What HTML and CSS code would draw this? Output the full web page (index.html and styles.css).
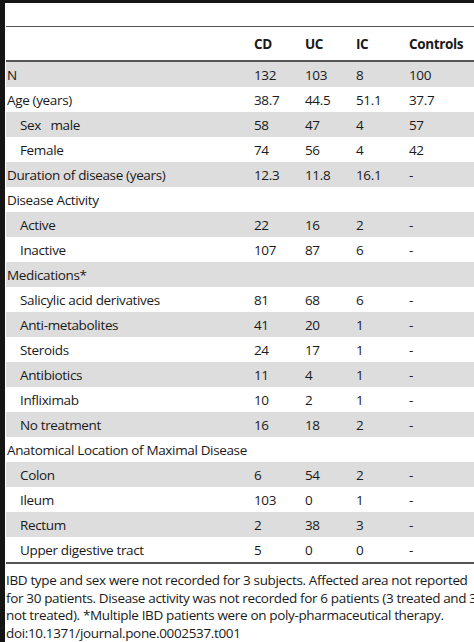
FILE: index.html
```html
<!DOCTYPE html>
<html>
<head>
<meta charset="utf-8">
<link rel="stylesheet" href="styles.css">
</head>
<body>
<div class="page">
  <div class="table">
    <div class="row head">
      <div class="lab"></div>
      <div class="num">CD</div>
      <div class="num">UC</div>
      <div class="num">IC</div>
      <div class="num">Controls</div>
    </div>
    <div class="row g"><div class="lab">N</div><div class="num">132</div><div class="num">103</div><div class="num">8</div><div class="num">100</div></div>
    <div class="row"><div class="lab">Age (years)</div><div class="num">38.7</div><div class="num">44.5</div><div class="num">51.1</div><div class="num">37.7</div></div>
    <div class="row g"><div class="lab ind">Sex&nbsp;&nbsp;&nbsp;male</div><div class="num">58</div><div class="num">47</div><div class="num">4</div><div class="num">57</div></div>
    <div class="row"><div class="lab ind">Female</div><div class="num">74</div><div class="num">56</div><div class="num">4</div><div class="num">42</div></div>
    <div class="row g"><div class="lab">Duration of disease (years)</div><div class="num">12.3</div><div class="num">11.8</div><div class="num">16.1</div><div class="num">-</div></div>
    <div class="row"><div class="lab">Disease Activity</div><div class="num"></div><div class="num"></div><div class="num"></div><div class="num"></div></div>
    <div class="row g"><div class="lab ind">Active</div><div class="num">22</div><div class="num">16</div><div class="num">2</div><div class="num">-</div></div>
    <div class="row"><div class="lab ind">Inactive</div><div class="num">107</div><div class="num">87</div><div class="num">6</div><div class="num">-</div></div>
    <div class="row g"><div class="lab">Medications*</div><div class="num"></div><div class="num"></div><div class="num"></div><div class="num"></div></div>
    <div class="row"><div class="lab ind">Salicylic acid derivatives</div><div class="num">81</div><div class="num">68</div><div class="num">6</div><div class="num">-</div></div>
    <div class="row g"><div class="lab ind">Anti-metabolites</div><div class="num">41</div><div class="num">20</div><div class="num">1</div><div class="num">-</div></div>
    <div class="row"><div class="lab ind">Steroids</div><div class="num">24</div><div class="num">17</div><div class="num">1</div><div class="num">-</div></div>
    <div class="row g"><div class="lab ind">Antibiotics</div><div class="num">11</div><div class="num">4</div><div class="num">1</div><div class="num">-</div></div>
    <div class="row"><div class="lab ind">Infliximab</div><div class="num">10</div><div class="num">2</div><div class="num">1</div><div class="num">-</div></div>
    <div class="row g"><div class="lab ind">No treatment</div><div class="num">16</div><div class="num">18</div><div class="num">2</div><div class="num">-</div></div>
    <div class="row"><div class="lab">Anatomical Location of Maximal Disease</div><div class="num"></div><div class="num"></div><div class="num"></div><div class="num"></div></div>
    <div class="row g"><div class="lab ind">Colon</div><div class="num">6</div><div class="num">54</div><div class="num">2</div><div class="num">-</div></div>
    <div class="row"><div class="lab ind">Ileum</div><div class="num">103</div><div class="num">0</div><div class="num">1</div><div class="num">-</div></div>
    <div class="row g"><div class="lab ind">Rectum</div><div class="num">2</div><div class="num">38</div><div class="num">3</div><div class="num">-</div></div>
    <div class="row"><div class="lab ind">Upper digestive tract</div><div class="num">5</div><div class="num">0</div><div class="num">0</div><div class="num">-</div></div>
  </div>
  <div class="notes">
    <div class="line">IBD type and sex were not recorded for 3 subjects. Affected area not reported</div>
    <div class="line">for 30 patients. Disease activity was not recorded for 6 patients (3 treated and 3</div>
    <div class="line">not treated). *Multiple IBD patients were on poly-pharmaceutical therapy.</div>
    <div class="line">doi:10.1371/journal.pone.0002537.t001</div>
  </div>
</div>
</body>
</html>
```

FILE: styles.css
```css
html, body {
  margin: 0;
  padding: 0;
  background: #fff;
}
body {
  width: 474px;
  height: 642px;
  overflow: hidden;
  font-family: "Open Sans", "Noto Sans", sans-serif;
  font-size: 13.5px;
  letter-spacing: -0.35px;
  color: #1a1a1a;
}
.page {
  border-top: 3px solid #151515;
  border-left: 5px solid #151515;
  padding-left: 1px;
  height: 639px;
  overflow: hidden;
}
.table {
  margin-top: 23px;
  border-top: 1px solid #555;
  border-bottom: 2px solid #555;
}
.row {
  display: grid;
  grid-template-columns: 248px 51px 51px 53px 1fr;
  height: 25px;
  align-items: center;
  white-space: nowrap;
}
.row.g {
  background: #dddddd;
}
.row.head {
  height: 33px;
  border-bottom: 2px solid #555;
  font-weight: bold;
}
.lab {
  padding-left: 1px;
}
.lab.ind {
  padding-left: 14px;
}
.notes {
  padding-top: 8px;
  white-space: nowrap;
  line-height: 17.7px;
}
```
